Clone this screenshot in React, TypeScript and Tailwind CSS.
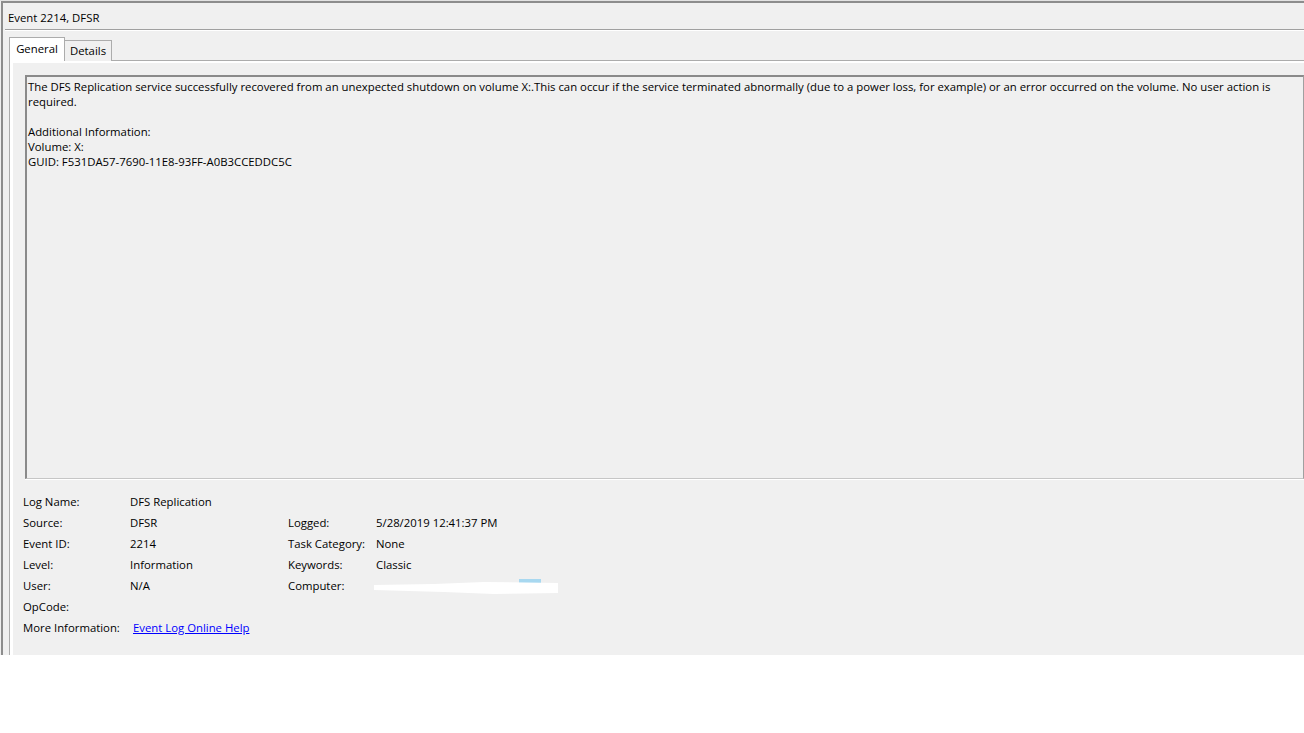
const FONT = "font-['Open_Sans','Liberation_Sans',Arial,sans-serif] text-[11.35px]";

const ROWS: [string, React.ReactNode, string?, React.ReactNode?][] = [
  ['Log Name:', 'DFS Replication'],
  ['Source:', 'DFSR', 'Logged:', '5/28/2019 12:41:37 PM'],
  ['Event ID:', '2214', 'Task Category:', 'None'],
  ['Level:', 'Information', 'Keywords:', 'Classic'],
  ['User:', 'N/A', 'Computer:', 'redacted'],
  ['OpCode:', ''],
  ['More Information:', 'link']
];

const Redacted = () => (
  <svg width="186" height="18" viewBox="0 0 186 18" className="block">
    <rect x="145" y="2" width="22" height="4" fill="#a8d8f0" />
    <path d="M0 8 L60 7 L110 5 L184 6 L184 16 L120 17 L70 15 L0 13 Z" fill="#ffffff" />
  </svg>
);

const renderValue = (v: React.ReactNode) => {
  if (v === 'link')
    return (
      <span className="ml-[3px] text-[#0000ff] underline underline-offset-[1px]">
        Event Log Online Help
      </span>
    );
  if (v === 'redacted') return <div className="h-[21px] flex items-center -ml-[2px]"><Redacted /></div>;
  return v;
};

const App = () => {
  return (
    <div className={`w-[1304px] h-[733px] bg-white overflow-hidden text-black ${FONT}`}>
      <div className="h-[655px] bg-[#f0f0f0] flex flex-col">
        <div className="h-px bg-[#e3e3e3]" />
        <div className="flex-1 flex flex-col ml-px border-l-2 border-t-2 border-[#8d8d8d]">
          <div className="h-[26px] pl-[5px] pt-[4px] flex items-center">Event 2214, DFSR</div>
          <div className="ml-[2px] h-[2px] border-t border-[#a0a0a0] border-b border-b-white" />

          <div className="flex-1 flex flex-col pl-[6px] pt-[6px]">
            <div className="flex items-end relative z-10 -mb-px">
              <div className="h-[24px] w-[56px] bg-white border border-b-0 border-[#acacac] flex items-center justify-center pb-[2px]">
                General
              </div>
              <div className="h-[21px] w-[47px] bg-[#f0f0f0] border border-l-0 border-b-0 border-[#acacac] flex items-center justify-center">
                Details
              </div>
            </div>

            <div className="flex-1 flex flex-col border-t border-l border-[#acacac] bg-white pl-[3px] pt-[2px]">
              <div className="flex-1 flex flex-col bg-[#f0f0f0] pl-[12px] pt-[12px]">
                <div className="h-[404px] border-t-2 border-l-2 border-[#8a8a8a] border-r border-r-[#a0a0a0] border-b border-b-[#c6c6c6] shadow-[0_1px_0_#ffffff] pl-[1px] pt-[2px] pr-[4px] leading-[15px]">
                  <p>
                    The DFS Replication service successfully recovered from an unexpected shutdown on volume X:.This can occur if the service terminated abnormally (due to a power loss, for example) or an error occurred on the volume. No user action is required.
                  </p>
                  <p className="mt-[15px]">Additional Information:</p>
                  <p>Volume: X:</p>
                  <p>GUID: F531DA57-7690-11E8-93FF-A0B3CCEDDC5C</p>
                </div>

                <div className="mt-[12px] -ml-[2px] grid grid-cols-[107px_158px_88px_1fr] auto-rows-[21px] leading-[21px]">
                  {ROWS.map(([label, value, label2, value2]) => (
                    <div key={label} className="contents">
                      <div>{label}</div>
                      <div>{renderValue(value)}</div>
                      <div>{label2 ?? ''}</div>
                      <div>{value2 !== undefined ? renderValue(value2) : ''}</div>
                    </div>
                  ))}
                </div>
              </div>
            </div>
          </div>
        </div>
      </div>
    </div>
  );
};

export default App;
